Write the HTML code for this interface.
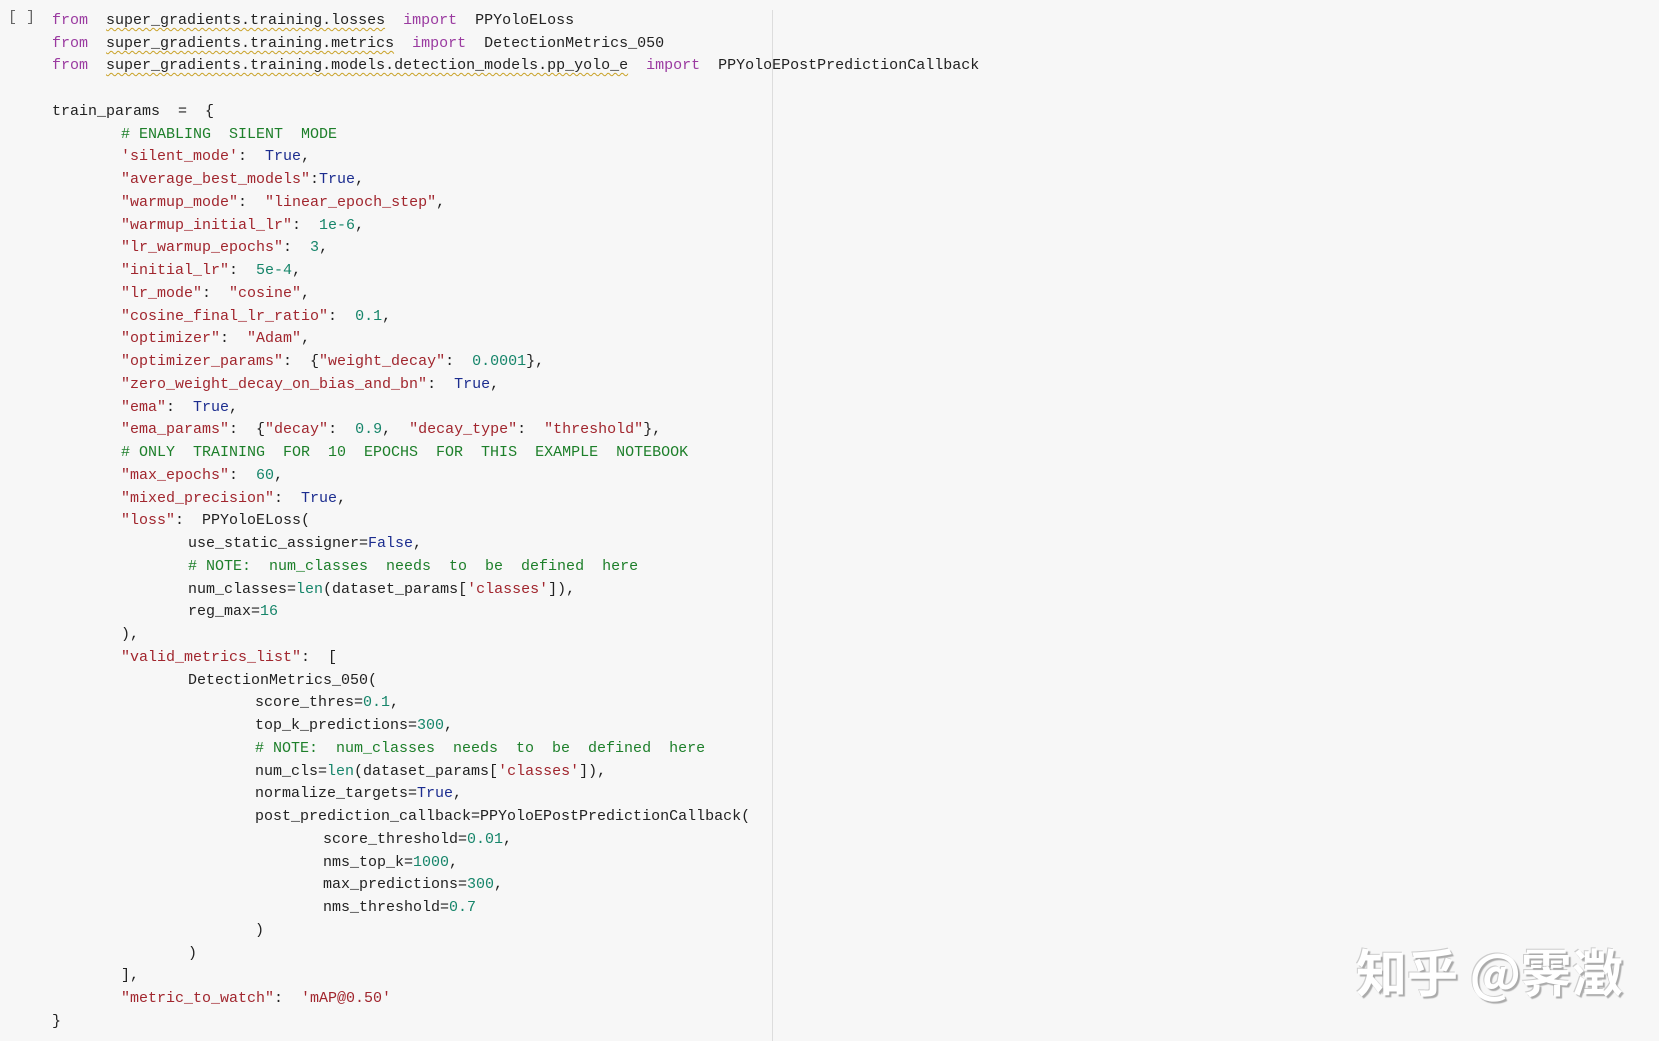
<!DOCTYPE html>
<html><head><meta charset="utf-8"><style>
html,body{margin:0;padding:0;}
body{width:1659px;height:1041px;background:#f7f7f7;position:relative;overflow:hidden;font-family:"Liberation Mono",monospace;font-size:15px;color:#222;}
.l{position:absolute;height:23px;line-height:23px;white-space:pre;}
.k{color:#9a3aa0}.s{color:#a1262e}.c{color:#1d7f2a}.b{color:#1c2d8f}.n{color:#16856a}
.u{text-decoration:underline wavy #c9a227;text-decoration-thickness:1px;text-underline-offset:3px}
.div{position:absolute;left:772px;top:10px;width:1px;height:1031px;background:#ddd}
.br{position:absolute;left:8px;top:9px;color:#666;white-space:pre}
.wm{position:absolute;left:1356px;top:933px;font-family:"Noto Sans CJK SC",sans-serif;font-size:51px;font-weight:bold;color:#fff;text-shadow:2px 2px 1px #aaa,-1px -1px 0 #ccc;white-space:pre}
</style></head><body>
<div class="br">[ ]</div>
<div class="div"></div>
<div class="l" style="left:52px;top:9px"><span class="k">from</span>  <span class="u">super_gradients.training.losses</span>  <span class="k">import</span>  PPYoloELoss</div>
<div class="l" style="left:52px;top:32px"><span class="k">from</span>  <span class="u">super_gradients.training.metrics</span>  <span class="k">import</span>  DetectionMetrics_050</div>
<div class="l" style="left:52px;top:54px"><span class="k">from</span>  <span class="u">super_gradients.training.models.detection_models.pp_yolo_e</span>  <span class="k">import</span>  PPYoloEPostPredictionCallback</div>
<div class="l" style="left:52px;top:100px">train_params  =  {</div>
<div class="l" style="left:121px;top:123px"><span class="c"># ENABLING  SILENT  MODE</span></div>
<div class="l" style="left:121px;top:145px"><span class="s">'silent_mode'</span>:  <span class="b">True</span>,</div>
<div class="l" style="left:121px;top:168px"><span class="s">"average_best_models"</span>:<span class="b">True</span>,</div>
<div class="l" style="left:121px;top:191px"><span class="s">"warmup_mode"</span>:  <span class="s">"linear_epoch_step"</span>,</div>
<div class="l" style="left:121px;top:214px"><span class="s">"warmup_initial_lr"</span>:  <span class="n">1e-6</span>,</div>
<div class="l" style="left:121px;top:236px"><span class="s">"lr_warmup_epochs"</span>:  <span class="n">3</span>,</div>
<div class="l" style="left:121px;top:259px"><span class="s">"initial_lr"</span>:  <span class="n">5e-4</span>,</div>
<div class="l" style="left:121px;top:282px"><span class="s">"lr_mode"</span>:  <span class="s">"cosine"</span>,</div>
<div class="l" style="left:121px;top:305px"><span class="s">"cosine_final_lr_ratio"</span>:  <span class="n">0.1</span>,</div>
<div class="l" style="left:121px;top:327px"><span class="s">"optimizer"</span>:  <span class="s">"Adam"</span>,</div>
<div class="l" style="left:121px;top:350px"><span class="s">"optimizer_params"</span>:  {<span class="s">"weight_decay"</span>:  <span class="n">0.0001</span>},</div>
<div class="l" style="left:121px;top:373px"><span class="s">"zero_weight_decay_on_bias_and_bn"</span>:  <span class="b">True</span>,</div>
<div class="l" style="left:121px;top:396px"><span class="s">"ema"</span>:  <span class="b">True</span>,</div>
<div class="l" style="left:121px;top:418px"><span class="s">"ema_params"</span>:  {<span class="s">"decay"</span>:  <span class="n">0.9</span>,  <span class="s">"decay_type"</span>:  <span class="s">"threshold"</span>},</div>
<div class="l" style="left:121px;top:441px"><span class="c"># ONLY  TRAINING  FOR  10  EPOCHS  FOR  THIS  EXAMPLE  NOTEBOOK</span></div>
<div class="l" style="left:121px;top:464px"><span class="s">"max_epochs"</span>:  <span class="n">60</span>,</div>
<div class="l" style="left:121px;top:487px"><span class="s">"mixed_precision"</span>:  <span class="b">True</span>,</div>
<div class="l" style="left:121px;top:509px"><span class="s">"loss"</span>:  PPYoloELoss(</div>
<div class="l" style="left:188px;top:532px">use_static_assigner=<span class="b">False</span>,</div>
<div class="l" style="left:188px;top:555px"><span class="c"># NOTE:  num_classes  needs  to  be  defined  here</span></div>
<div class="l" style="left:188px;top:578px">num_classes=<span class="n">len</span>(dataset_params[<span class="s">'classes'</span>]),</div>
<div class="l" style="left:188px;top:600px">reg_max=<span class="n">16</span></div>
<div class="l" style="left:121px;top:623px">),</div>
<div class="l" style="left:121px;top:646px"><span class="s">"valid_metrics_list"</span>:  [</div>
<div class="l" style="left:188px;top:669px">DetectionMetrics_050(</div>
<div class="l" style="left:255px;top:691px">score_thres=<span class="n">0.1</span>,</div>
<div class="l" style="left:255px;top:714px">top_k_predictions=<span class="n">300</span>,</div>
<div class="l" style="left:255px;top:737px"><span class="c"># NOTE:  num_classes  needs  to  be  defined  here</span></div>
<div class="l" style="left:255px;top:760px">num_cls=<span class="n">len</span>(dataset_params[<span class="s">'classes'</span>]),</div>
<div class="l" style="left:255px;top:782px">normalize_targets=<span class="b">True</span>,</div>
<div class="l" style="left:255px;top:805px">post_prediction_callback=PPYoloEPostPredictionCallback(</div>
<div class="l" style="left:323px;top:828px">score_threshold=<span class="n">0.01</span>,</div>
<div class="l" style="left:323px;top:851px">nms_top_k=<span class="n">1000</span>,</div>
<div class="l" style="left:323px;top:873px">max_predictions=<span class="n">300</span>,</div>
<div class="l" style="left:323px;top:896px">nms_threshold=<span class="n">0.7</span></div>
<div class="l" style="left:255px;top:919px">)</div>
<div class="l" style="left:188px;top:942px">)</div>
<div class="l" style="left:121px;top:964px">],</div>
<div class="l" style="left:121px;top:987px"><span class="s">"metric_to_watch"</span>:  <span class="s">'mAP@0.50'</span></div>
<div class="l" style="left:52px;top:1010px">}</div>
<div class="wm">知乎 @霁澂</div>
</body></html>
